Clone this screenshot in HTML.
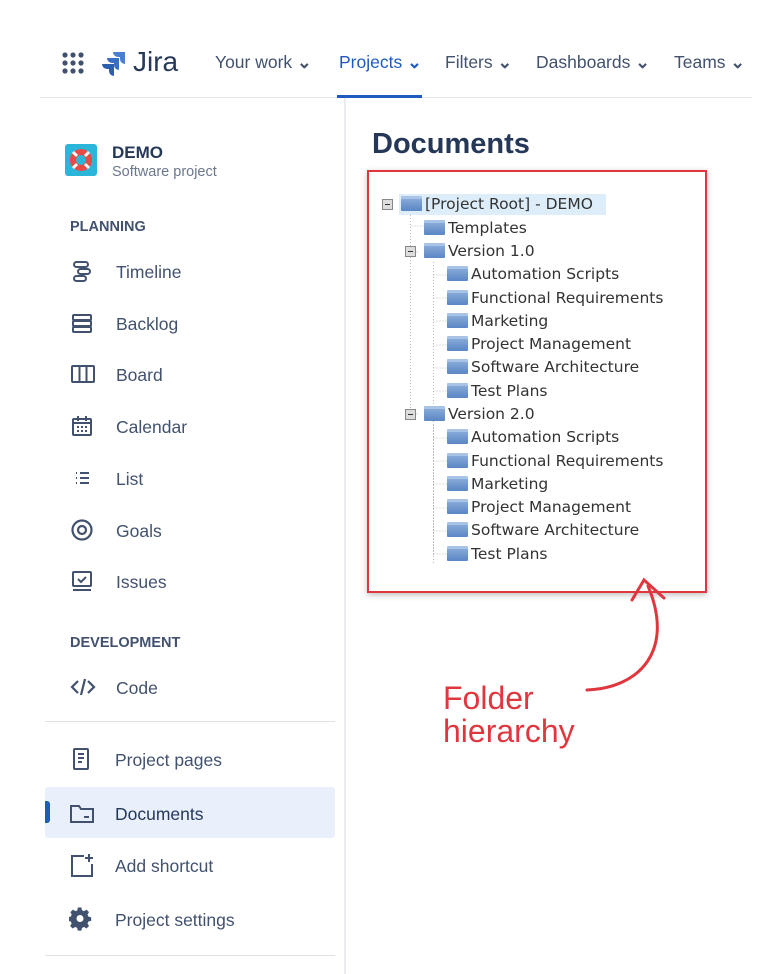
<!DOCTYPE html>
<html><head><meta charset="utf-8"><style>
*{margin:0;padding:0;box-sizing:border-box}
body{width:767px;height:974px;background:#fff;position:relative;overflow:hidden;font-family:"Liberation Sans",sans-serif;color:#42526e}
.a{position:absolute;white-space:nowrap}
.nav{font-size:17.5px;color:#42526e;top:52px}
.si{position:absolute;left:70px;font-size:17.5px;color:#42526e;white-space:nowrap}
.si svg{position:absolute;left:0;top:-3px}
.si span{position:absolute;left:46px;top:0;white-space:nowrap}
.tr{position:absolute;font-family:"DejaVu Sans",sans-serif;font-size:15.5px;color:#333;height:20px;line-height:20px;white-space:nowrap}
.fd{display:inline-block;width:21px;height:15px;background:linear-gradient(#86a9d8,#5a86c4);border-top:3px solid #a9c3e6;vertical-align:-2px;margin-right:3px;border-radius:1px}
.pm{position:absolute;width:11px;height:11px;border:1px solid #888;background:#ddd;font-size:0}
.pm:after{content:"";position:absolute;left:2px;top:4px;width:5px;height:1px;background:#333}
</style></head><body>
<div class="a" style="left:62px;top:52px;width:22px;height:22px">
<svg width="22" height="22" fill="#42526e"><g><circle cx="3" cy="3" r="2.6"/><circle cx="11" cy="3" r="2.6"/><circle cx="19" cy="3" r="2.6"/><circle cx="3" cy="11" r="2.6"/><circle cx="11" cy="11" r="2.6"/><circle cx="19" cy="11" r="2.6"/><circle cx="3" cy="19" r="2.6"/><circle cx="11" cy="19" r="2.6"/><circle cx="19" cy="19" r="2.6"/></g></svg></div>
<svg class="a" style="left:101px;top:50px" width="26" height="26" viewBox="0 0 26 26"><path d="M12 2h12v12a5 5 0 0 1-5-5V7h-2a5 5 0 0 1-5-5z" fill="#4a7fd0"/><path d="M6 8h12v12a5 5 0 0 1-5-5v-2h-2a5 5 0 0 1-5-5z" fill="#3a70c4"/><path d="M1 14h12v12a5 5 0 0 1-5-5v-2H6a5 5 0 0 1-5-5z" fill="#2c5fb0"/></svg>
<div class="a" style="left:133px;top:46px;font-size:28px;color:#253858">Jira</div>
<div class="a nav" style="left:215px">Your work <b>⌄</b></div>
<div class="a nav" style="left:339px;color:#1f5bbf">Projects <b>⌄</b></div>
<div class="a nav" style="left:445px">Filters <b>⌄</b></div>
<div class="a nav" style="left:536px">Dashboards <b>⌄</b></div>
<div class="a nav" style="left:674px">Teams <b>⌄</b></div>
<div class="a" style="left:40px;top:97px;width:712px;height:1px;background:#e4e6ea"></div>
<div class="a" style="left:337px;top:95px;width:85px;height:3px;background:#1f5bbf"></div>
<div class="a" style="left:344px;top:98px;width:2px;height:876px;background:#ebecf0"></div>
<svg class="a" style="left:65px;top:144px" width="32" height="32"><rect width="32" height="32" rx="3" fill="#2bb6d9"/><circle cx="16" cy="16" r="11" fill="#e84a45"/><circle cx="16" cy="16" r="5" fill="#2bb6d9"/><g stroke="#fff" stroke-width="3"><path d="M8 8l4 4M24 8l-4 4M8 24l4-4M24 24l-4-4"/></g></svg>
<div class="a" style="left:112px;top:143px;font-size:17px;font-weight:bold;color:#253858">DEMO</div>
<div class="a" style="left:112px;top:164px;font-size:14.5px;color:#6b778c">Software project</div>
<div class="a" style="left:70px;top:219px;font-size:14.5px;font-weight:bold;color:#42526e">PLANNING</div>
<div class="si" style="top:262px"><svg width="24" height="24" fill="none" stroke="#42526e" stroke-width="2"><rect x="4" y="3" width="14" height="5" rx="2.5"/><rect x="8" y="10" width="12" height="5" rx="2.5"/><rect x="4" y="17" width="12" height="5" rx="2.5"/></svg><span>Timeline</span></div>
<div class="si" style="top:314px"><svg width="24" height="24" fill="none" stroke="#42526e" stroke-width="2"><rect x="3" y="4" width="18" height="5" rx="1"/><rect x="3" y="10" width="18" height="5" rx="1"/><rect x="3" y="16" width="18" height="5" rx="1"/></svg><span>Backlog</span></div>
<div class="si" style="top:365px"><svg width="26" height="24" fill="none" stroke="#42526e" stroke-width="2"><rect x="2" y="4" width="22" height="16" rx="1"/><path d="M9.5 4v16M16.5 4v16"/></svg><span>Board</span></div>
<div class="si" style="top:417px"><svg width="24" height="24" fill="none" stroke="#42526e" stroke-width="2"><rect x="3" y="5" width="18" height="16" rx="1"/><path d="M3 9h18M8 2v5M16 2v5"/><g fill="#42526e" stroke="none"><rect x="7" y="12" width="2" height="2"/><rect x="11" y="12" width="2" height="2"/><rect x="15" y="12" width="2" height="2"/><rect x="7" y="16" width="2" height="2"/><rect x="11" y="16" width="2" height="2"/><rect x="15" y="16" width="2" height="2"/></g></svg><span>Calendar</span></div>
<div class="si" style="top:469px"><svg width="24" height="24" fill="none" stroke="#42526e" stroke-width="2"><path d="M6 7h1M6 12h1M6 17h1M10 7h9M10 12h9M10 17h9"/></svg><span>List</span></div>
<div class="si" style="top:521px"><svg width="24" height="24" fill="none" stroke="#42526e" stroke-width="2.2"><circle cx="12" cy="12" r="9.5"/><circle cx="12" cy="12" r="4"/></svg><span>Goals</span></div>
<div class="si" style="top:572px"><svg width="24" height="24" fill="none" stroke="#42526e" stroke-width="2"><rect x="3" y="3" width="18" height="14" rx="1"/><path d="M8 10l3 3 5-5M3 21h18"/></svg><span>Issues</span></div>
<div class="a" style="left:70px;top:635px;font-size:14.5px;font-weight:bold;color:#42526e">DEVELOPMENT</div>
<div class="si" style="top:678px"><svg width="26" height="24" fill="none" stroke="#42526e" stroke-width="2.2"><path d="M8 6l-6 6 6 6M18 6l6 6-6 6M15 4l-4 16"/></svg><span>Code</span></div>
<div class="a" style="left:45px;top:721px;width:290px;height:1px;background:#dfe1e6"></div>
<div class="a" style="left:45px;top:787px;width:290px;height:51px;background:#e9f0fc;border-radius:3px"></div>
<div class="a" style="left:45px;top:801px;width:5px;height:22px;background:#1f5bbf;border-radius:0 3px 3px 0"></div>
<div class="si" style="top:750px;left:69px"><svg width="24" height="24" fill="none" stroke="#42526e" stroke-width="2"><rect x="5" y="2" width="14" height="20" rx="1"/><path d="M9 7h6M9 11h6M9 15h4"/></svg><span>Project pages</span></div>
<div class="si" style="top:804px;left:69px"><svg width="26" height="24" fill="none" stroke="#42526e" stroke-width="2"><path d="M2 5h8l2 3h12v13H2z"/><path d="M15 16h5"/></svg><span style="color:#253858">Documents</span></div>
<div class="si" style="top:856px;left:69px"><svg width="26" height="26" fill="none" stroke="#42526e" stroke-width="2"><path d="M15 3H3v20h20V11"/><path d="M20 1v8M16 5h8"/></svg><span>Add shortcut</span></div>
<div class="si" style="top:910px;left:69px"><svg width="24" height="24" viewBox="0 0 24 24"><path fill="#42526e" d="M10 1h4l.6 3 2.3 1 2.6-1.7 2.8 2.8L20.6 8.7l1 2.3 3 .6v4l-3 .6-1 2.3 1.7 2.6-2.8 2.8-2.6-1.7-2.3 1-.6 3h-4l-.6-3-2.3-1-2.6 1.7-2.8-2.8 1.7-2.6-1-2.3-3-.6v-4l3-.6 1-2.3L2 6.1l2.8-2.8L7.4 5l2.3-1z" transform="scale(.92) translate(-.5 -.5)"/><circle cx="11" cy="11.5" r="3.5" fill="#fff"/></svg><span>Project settings</span></div>
<div class="a" style="left:45px;top:955px;width:290px;height:1px;background:#dfe1e6"></div>
<div class="a" style="left:372px;top:128px;font-size:29px;font-weight:bold;color:#253858">Documents</div>
<div class="a" style="left:367px;top:170px;width:340px;height:423px;border:2px solid #e0373f;box-shadow:0 2px 6px rgba(0,0,0,.25)"></div>
<svg class="a" style="left:380px;top:190px" width="280" height="380" stroke="#bbb" stroke-dasharray="1 2" fill="none">
<path d="M30.5 25v11h14M30.5 25v196M30.5 62h8M30.5 224h8M53.5 72v302M53.5 85h14M53.5 108h14M53.5 131h14M53.5 155h14M53.5 178h14M53.5 201h14M53.5 248h14M53.5 271h14M53.5 294h14M53.5 318h14M53.5 341h14M53.5 364h14M53.5 235v130"/>
</svg>
<div class="a" style="left:399px;top:194px;width:207px;height:21px;background:#ddeefa"></div>
<div class="pm" style="left:382px;top:199px"></div>
<div class="pm" style="left:405px;top:246px"></div>
<div class="pm" style="left:405px;top:409px"></div>
<div class="tr" style="left:401px;top:194px"><i class="fd"></i>[Project Root] - DEMO</div>
<div class="tr" style="left:424px;top:218px"><i class="fd"></i>Templates</div>
<div class="tr" style="left:424px;top:241px"><i class="fd"></i>Version 1.0</div>
<div class="tr" style="left:447px;top:264px"><i class="fd"></i>Automation Scripts</div>
<div class="tr" style="left:447px;top:288px"><i class="fd"></i>Functional Requirements</div>
<div class="tr" style="left:447px;top:311px"><i class="fd"></i>Marketing</div>
<div class="tr" style="left:447px;top:334px"><i class="fd"></i>Project Management</div>
<div class="tr" style="left:447px;top:357px"><i class="fd"></i>Software Architecture</div>
<div class="tr" style="left:447px;top:381px"><i class="fd"></i>Test Plans</div>
<div class="tr" style="left:424px;top:404px"><i class="fd"></i>Version 2.0</div>
<div class="tr" style="left:447px;top:427px"><i class="fd"></i>Automation Scripts</div>
<div class="tr" style="left:447px;top:451px"><i class="fd"></i>Functional Requirements</div>
<div class="tr" style="left:447px;top:474px"><i class="fd"></i>Marketing</div>
<div class="tr" style="left:447px;top:497px"><i class="fd"></i>Project Management</div>
<div class="tr" style="left:447px;top:520px"><i class="fd"></i>Software Architecture</div>
<div class="tr" style="left:447px;top:544px"><i class="fd"></i>Test Plans</div>
<svg class="a" style="left:580px;top:570px" width="110" height="130" fill="none" stroke="#e0373f" stroke-width="3" stroke-linecap="round"><path d="M7 120C60 118 95 80 68 16"/><path d="M52 30L64 10l20 18"/></svg>
<div class="a" style="left:443px;top:682px;font-size:32px;line-height:33px;color:#e0373f">Folder<br>hierarchy</div>
</body></html>
